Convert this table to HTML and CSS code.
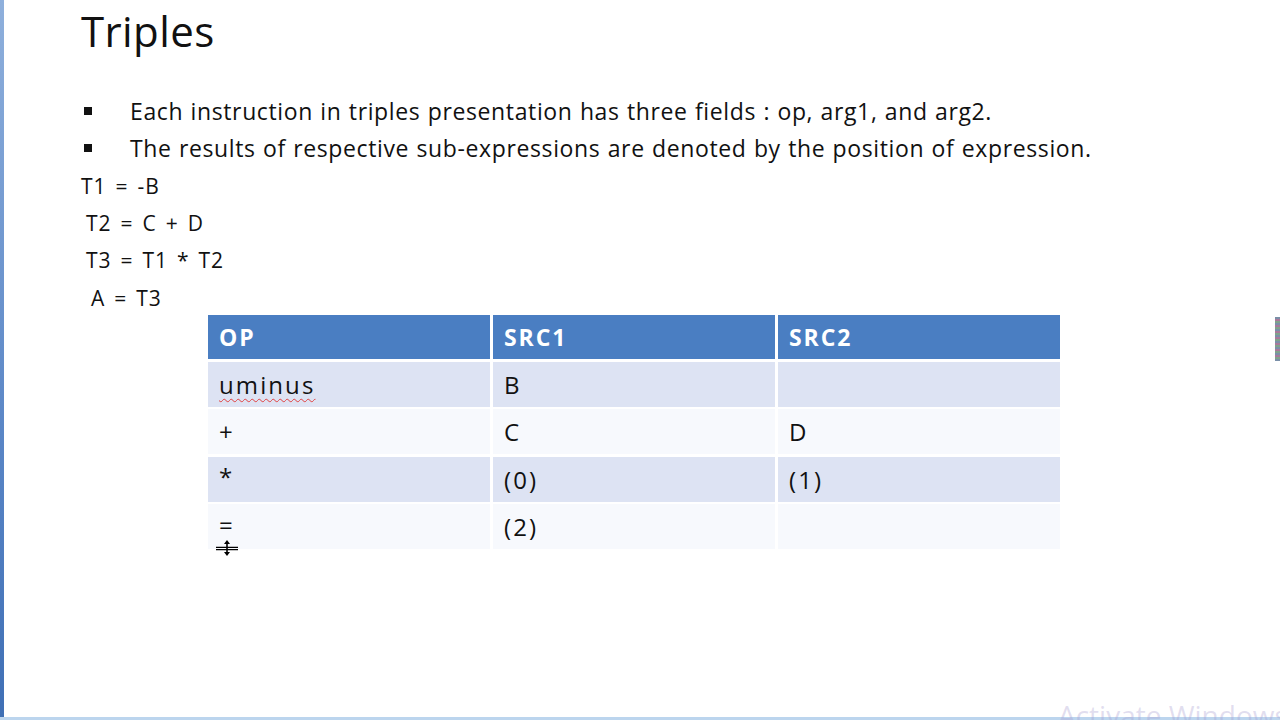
FILE: index.html
```html
<!DOCTYPE html>
<html>
<head>
<meta charset="utf-8">
<link rel="stylesheet" href="styles.css">
</head>
<body>
<div class="screen">
  <div class="edge-left"></div>
  <main class="slide">
    <h1 class="title">Triples</h1>
    <ul class="bullets">
      <li><span class="sq"></span><span>Each instruction in triples presentation has three fields : op, arg1, and arg2.</span></li>
      <li><span class="sq"></span><span>The results of respective sub-expressions are denoted by the position of expression.</span></li>
    </ul>
    <div class="eqs">
      <div class="eq e1">T1 = -B</div>
      <div class="eq e2">T2 = C + D</div>
      <div class="eq e3">T3 = T1 * T2</div>
      <div class="eq e4">A = T3</div>
    </div>
    <div class="table">
      <div class="cell head">OP</div><div class="cell head">SRC1</div><div class="cell head">SRC2</div>
      <div class="cell odd"><span class="squiggle">uminus</span></div><div class="cell odd">B</div><div class="cell odd"></div>
      <div class="cell even">+</div><div class="cell even">C</div><div class="cell even">D</div>
      <div class="cell odd star">*</div><div class="cell odd">(0)</div><div class="cell odd">(1)</div>
      <div class="cell even">
        <span class="eqsign">=</span>
        <svg class="cursor" width="22" height="20" viewBox="0 0 22 20"><path d="M11 2 L8 6 H14 Z M11 18 L8 14 H14 Z" fill="#000"/><path d="M0 9.3 H22 M0 11.7 H22" stroke="#000" stroke-width="1.3"/><path d="M11 5 V15" stroke="#000" stroke-width="1.6"/></svg>
      </div><div class="cell even">(2)</div><div class="cell even"></div>
    </div>
  </main>
  <div class="scrollmark"></div>
  <div class="edge-bottom"></div>
  <div class="watermark">Activate Windows</div>
</div>
</body>
</html>
```
FILE: styles.css
```css
* { box-sizing: border-box; }
html, body { margin: 0; padding: 0; background: #fff; }
body { font-family: "Open Sans", "Lato", sans-serif; color: #111; }
.screen { position: relative; width: 1280px; height: 720px; overflow: hidden; display: flex; background: #fff; }
.edge-left { width: 4px; height: 100%; background: linear-gradient(#8fb0dc, #5a86c6 60%, #3f6fb5); flex: none; }
.slide { flex: 1; padding-left: 77px; display: flex; flex-direction: column; }
.title { margin: 6px 0 0 0; font-weight: 400; font-size: 42px; line-height: 50px; letter-spacing: 0.4px; color: #111; }
.bullets { list-style: none; margin: 36px 0 0 0; padding: 0; }
.bullets li { display: flex; align-items: center; height: 37.5px; font-size: 23px; letter-spacing: 0.62px; word-spacing: 0.8px; }
.sq { width: 8px; height: 8px; background: #111; margin: 0 38px 0 3px; flex: none; }
.eqs { display: flex; flex-direction: column; font-size: 21px; letter-spacing: 1px; word-spacing: 2.5px; }
.eq { height: 37.3px; display: flex; align-items: center; }
.e1 { padding-left: 0; }
.e2 { padding-left: 5px; }
.e3 { padding-left: 5px; }
.e4 { padding-left: 10px; }
.table { margin: -1px 0 0 127px; width: 852px; display: grid; grid-template-columns: 282px 282px 282px; column-gap: 3px; row-gap: 2.5px; font-size: 24px; letter-spacing: 2.1px; }
.cell { height: 45px; padding-left: 11px; display: flex; align-items: center; position: relative; }
.head { background: #4a7ec2; color: #fff; font-weight: 700; height: 44px; font-size: 23px; letter-spacing: 1.9px; }
.odd { background: #dde3f3; }
.even { background: #f7f9fd; }
.star { align-items: flex-start; padding-top: 3px; }
.squiggle { text-decoration: underline wavy #e04040; text-decoration-thickness: 1px; text-underline-offset: 4px; }
.eqsign { position: relative; top: -2px; }
.cursor { position: absolute; left: 8px; top: 34px; }
.scrollmark { position: absolute; right: 0; top: 317px; width: 5px; height: 44px; background: repeating-linear-gradient(#7a8fa8 0 2px, #a9789a 2px 4px, #7fa28a 4px 6px); }
.edge-bottom { position: absolute; left: 0; right: 0; bottom: 0; height: 3px; background: #bcd5ee; }
.watermark { position: absolute; left: 1058px; bottom: -14px; white-space: nowrap; font-size: 28px; color: rgba(170,160,210,0.35); font-family: "Open Sans", sans-serif; }
```
